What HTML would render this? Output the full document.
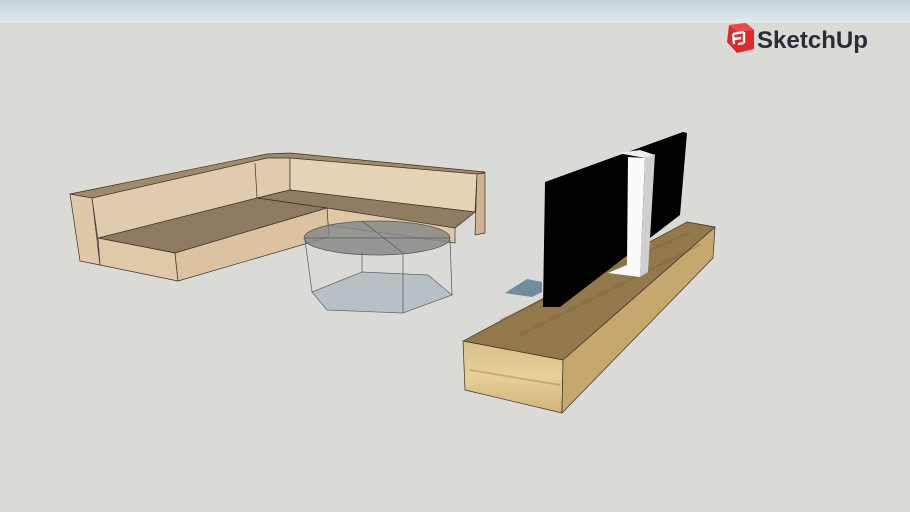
<!DOCTYPE html>
<html><head><meta charset="utf-8"><style>
html,body{margin:0;padding:0;width:910px;height:512px;overflow:hidden;background:#dadad6}
</style></head><body>
<svg width="910" height="512" viewBox="0 0 910 512" xmlns="http://www.w3.org/2000/svg">
<defs>
<linearGradient id="sky" x1="0" y1="0" x2="0" y2="1"><stop offset="0" stop-color="#c3d2da"/><stop offset="1" stop-color="#e2e9ec"/></linearGradient>
<linearGradient id="wood" x1="0" y1="0" x2="0" y2="1"><stop offset="0" stop-color="#d9c08a"/><stop offset="0.5" stop-color="#e6cf98"/><stop offset="1" stop-color="#cfb27a"/></linearGradient>
</defs>
<rect width="910" height="512" fill="#dadad6"/>
<rect width="910" height="23" fill="url(#sky)"/>
<g stroke="#3a3228" stroke-width="0.7" stroke-linejoin="round">
<polygon points="70,194 267,154 290,153 485,172 477,175 290,158 92,199" fill="#a08a6c"/>
<polygon points="92,198 267,158 290,158 290,190 257,198 98,240" fill="#e0cbae"/>
<line x1="255" y1="163" x2="257" y2="198"/>
<polygon points="290,158 477,174 475,212 290,190" fill="#e6d2b4"/>
<polygon points="477,174 485,173 485,233 475,235" fill="#cfb595"/>
<polygon points="327,208 475,212 455,228 455,243 327,225" fill="#dec8a8"/>
<polygon points="257,198 290,190 475,212 455,228 327,208" fill="#907c63"/>
<polygon points="98,238 257,198 327,208 175,253" fill="#8e7a60"/>
<polygon points="98,238 175,253 178,281 100,265" fill="#e0c9a8"/>
<polygon points="175,253 327,208 329,237 178,281" fill="#dbc3a2"/>
<polygon points="70,194 92,198 100,265 80,261" fill="#dfc8a8"/>
</g>
<g stroke="#555" stroke-width="0.7" fill="none">
<polygon points="312,292 362,272 428,275 452,295 403,313 327,310" fill="#b7c0c4" stroke="#666"/>
<line x1="305" y1="240" x2="312" y2="292"/>
<line x1="450" y1="240" x2="452" y2="295"/>
<line x1="362" y1="252" x2="362" y2="272"/>
<line x1="403" y1="253" x2="403" y2="313"/>
<ellipse cx="377" cy="238" rx="73" ry="17" fill="#8a8a88" fill-opacity="0.85" stroke="#555"/>
<line x1="304" y1="238" x2="450" y2="238"/>
<line x1="362" y1="221" x2="403" y2="253"/>
</g>
<polygon points="505,293 527,279 542,282 542,292 532,297" fill="#6f8d9c"/>
<g stroke="#3a3228" stroke-width="0.7" stroke-linejoin="round">
<polygon points="463,341 687,222 715,227 563,360" fill="#93784c"/>
<polygon points="463,341 563,360 562,413 465,390" fill="url(#wood)"/>
<polygon points="563,360 715,227 713,258 562,413" fill="#c6a86f"/>
</g>
<g opacity="0.25" stroke="#6b5330" stroke-width="2">
<line x1="500" y1="320" x2="690" y2="232"/>
<line x1="520" y1="335" x2="700" y2="245"/>
<line x1="470" y1="370" x2="560" y2="385"/>
</g>
<polygon points="545,182 683,132 687,133 680,215 560,307 543,307" fill="#000"/>
<polygon points="628,157 645,158 640,277 608,273 627,265" fill="#fafafa"/>
<polygon points="618,153 645,158 655,155 640,150" fill="#eee"/>
<polygon points="645,158 655,154 648,272 640,277" fill="#cfcfcf"/>
<g transform="translate(726,22)">
<polygon points="3,3 20,1 28,8 28,27 11,31 1,20" fill="#e02a2a"/>
<polygon points="3,3 20,1 28,8 11,10" fill="#f04a48"/>
<path d="M7,12 L18,10 M7,12 L8,22 M8,17 L15,16 M12,22 L18,21 M18,10 L18,21" stroke="#fff" stroke-width="2.4" fill="none"/>
</g>
<text x="757" y="48" font-family="Liberation Sans, sans-serif" font-weight="bold" font-size="24" textLength="111" lengthAdjust="spacingAndGlyphs" fill="#2b2b3a">SketchUp</text>
</svg>
</body></html>
